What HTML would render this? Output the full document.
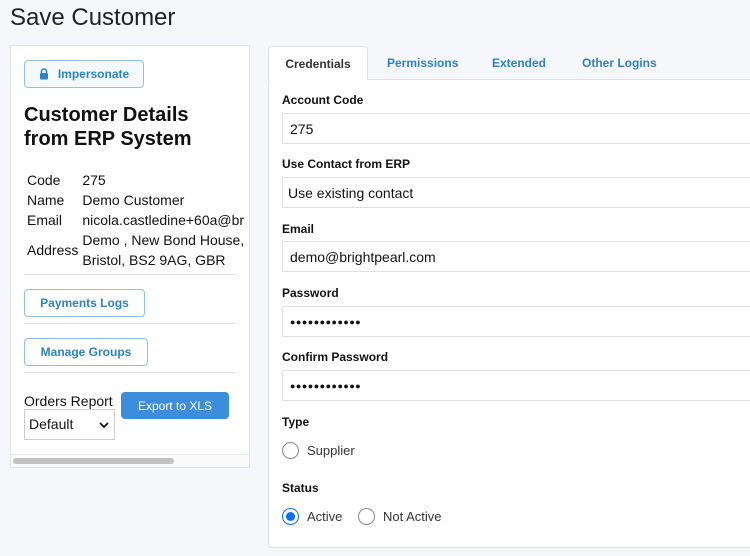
<!DOCTYPE html>
<html><head><style>
*{box-sizing:border-box;margin:0;padding:0}
body{width:750px;height:556px;background:#f5f7fa;font-family:"Liberation Sans",sans-serif;position:relative;overflow:hidden;color:#111}
.a{position:absolute}
.btn{position:absolute;border:1.5px solid #8fc1e8;border-radius:4px;background:#fff;color:#2d82c6;font-size:12px;font-weight:bold;display:flex;align-items:center;justify-content:center}
.lbl{position:absolute;left:282px;font-size:12px;font-weight:bold;color:#111}
.inp{position:absolute;left:282px;width:480px;height:31px;border:1px solid #dde1e5;background:#fff;font-size:14px;padding-left:7px;display:flex;align-items:center}
.pw{font-size:9px;letter-spacing:0.5px}
.dv{position:absolute;left:24px;width:212px;height:1px;background:#dfe2e5}
.r{position:absolute;width:17px;height:17px;border:1.5px solid #888;border-radius:50%;background:#fff}
.rt{position:absolute;font-size:13px;color:#333}
td{font-size:14px;padding:0 2px;vertical-align:middle;height:20px;white-space:nowrap}
</style></head><body>
<div class="a" style="left:10px;top:4px;font-size:24px;color:#222">Save Customer</div>

<div class="a" style="left:10px;top:45px;width:240px;height:423px;background:#fff;border:1px solid #e0e3e6;overflow:hidden"></div>
<div class="btn" style="left:24px;top:60px;width:120px;height:28px;background:#f4f9fe"><svg width="10" height="12" viewBox="0 0 10 12" style="margin-right:9px"><path d="M2.5 5V3.5a2.5 2.5 0 0 1 5 0V5" fill="none" stroke="#2d82c6" stroke-width="1.6"/><rect x="1" y="5" width="8" height="6.5" rx="1" fill="#2d82c6"/></svg>Impersonate</div>
<div class="a" style="left:24px;top:103px;font-size:20px;font-weight:bold;line-height:24px">Customer Details<br>from ERP System</div>
<div class="a" style="left:11px;top:170px;width:238px;height:100px;overflow:hidden">
<table style="position:absolute;left:14px;top:0;border-collapse:collapse;color:#111">
<tr><td>Code</td><td>275</td></tr>
<tr><td>Name</td><td>Demo Customer</td></tr>
<tr><td>Email</td><td>nicola.castledine+60a@br</td></tr>
<tr><td>Address</td><td style="line-height:20px">Demo , New Bond House,<br>Bristol, BS2 9AG, GBR</td></tr>
</table></div>
<div class="dv" style="top:274px"></div>
<div class="btn" style="left:24px;top:289px;width:121px;height:28px">Payments Logs</div>
<div class="dv" style="top:323px"></div>
<div class="btn" style="left:24px;top:338px;width:124px;height:28px">Manage Groups</div>
<div class="dv" style="top:372px"></div>
<div class="a" style="left:24px;top:393px;font-size:14px">Orders Report</div>
<div class="a" style="left:24px;top:409px;width:91px;height:31px;border:1px solid #ccc;background:#fff;font-size:14px;padding:6px 4px">Default<svg width="10" height="7" viewBox="0 0 10 7" style="position:absolute;right:5px;top:12px"><path d="M1 1l4 4 4-4" fill="none" stroke="#111" stroke-width="1.8"/></svg></div>
<div class="a" style="left:121px;top:392px;width:108px;height:27px;background:#3d8ddd;border-radius:4px;color:#fff;font-size:12px;display:flex;align-items:center;justify-content:center">Export to XLS</div>
<div class="a" style="left:11px;top:454px;width:238px;height:13px;border-top:1px solid #e5e7ea;background:#fafafa"></div>
<div class="a" style="left:13px;top:458px;width:161px;height:6px;border-radius:3px;background:#c1c1c1"></div>

<div class="a" style="left:268px;top:79px;width:490px;height:469px;background:#fff;border:1px solid #e0e3e6;border-radius:4px"></div>
<div class="a" style="left:268px;top:46px;width:100px;height:34px;background:#fff;border:1px solid #e0e3e6;border-bottom:none;border-radius:4px 4px 0 0;font-size:12px;font-weight:bold;color:#333;display:flex;align-items:center;justify-content:center">Credentials</div>
<div class="a" style="left:387px;top:56px;font-size:12px;font-weight:bold;color:#2d82c6">Permissions</div>
<div class="a" style="left:492px;top:56px;font-size:12px;font-weight:bold;color:#2d82c6">Extended</div>
<div class="a" style="left:582px;top:56px;font-size:12px;font-weight:bold;color:#2d82c6">Other Logins</div>

<div class="lbl" style="top:93px">Account Code</div>
<div class="inp" style="top:113px">275</div>
<div class="lbl" style="top:157px">Use Contact from ERP</div>
<div class="inp" style="top:177px;padding-left:5px">Use existing contact</div>
<div class="lbl" style="top:222px">Email</div>
<div class="inp" style="top:241px">demo@brightpearl.com</div>
<div class="lbl" style="top:286px">Password</div>
<div class="inp pw" style="top:306px">&#9679;&#9679;&#9679;&#9679;&#9679;&#9679;&#9679;&#9679;&#9679;&#9679;&#9679;&#9679;</div>
<div class="lbl" style="top:350px">Confirm Password</div>
<div class="inp pw" style="top:370px">&#9679;&#9679;&#9679;&#9679;&#9679;&#9679;&#9679;&#9679;&#9679;&#9679;&#9679;&#9679;</div>

<div class="lbl" style="top:415px">Type</div>
<div class="r" style="left:282px;top:442px"></div>
<div class="rt" style="left:307px;top:443px">Supplier</div>
<div class="lbl" style="top:481px">Status</div>
<div class="r" style="left:282px;top:508px;border:1.5px solid #0d6efd"><div style="position:absolute;left:2.5px;top:2.5px;width:9px;height:9px;border-radius:50%;background:#0d6efd"></div></div>
<div class="rt" style="left:307px;top:509px">Active</div>
<div class="r" style="left:358px;top:508px"></div>
<div class="rt" style="left:383px;top:509px">Not Active</div>
</body></html>
